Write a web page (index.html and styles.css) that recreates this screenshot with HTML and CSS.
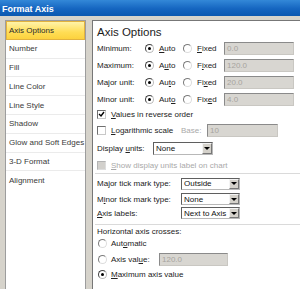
FILE: index.html
```html
<!DOCTYPE html>
<html>
<head>
<meta charset="utf-8">
<link rel="stylesheet" href="styles.css">
</head>
<body>
<div class="title">Format Axis</div>
<div class="main">
  <ul class="nav">
    <li class="sel">Axis Options</li>
    <li>Number</li>
    <li>Fill</li>
    <li>Line Color</li>
    <li>Line Style</li>
    <li>Shadow</li>
    <li>Glow and Soft Edges</li>
    <li>3-D Format</li>
    <li class="last">Alignment</li>
  </ul>
  <div class="pane">
    <div class="heading">Axis Options</div>

    <div class="row h17">
      <span class="lbl">Minimum:</span>
      <span class="radio on"></span><span class="opt"><u>A</u>uto</span>
      <span class="radio"></span><span class="opt2"><u>F</u>ixed</span>
      <span class="inp w70">0.0</span>
    </div>
    <div class="row h17">
      <span class="lbl">Maximum:</span>
      <span class="radio on"></span><span class="opt">A<u>u</u>to</span>
      <span class="radio"></span><span class="opt2">F<u>i</u>xed</span>
      <span class="inp w70">120.0</span>
    </div>
    <div class="row h17">
      <span class="lbl">Major unit:</span>
      <span class="radio on"></span><span class="opt">Au<u>t</u>o</span>
      <span class="radio"></span><span class="opt2">Fi<u>x</u>ed</span>
      <span class="inp w70">20.0</span>
    </div>
    <div class="row h17">
      <span class="lbl">Minor unit:</span>
      <span class="radio on"></span><span class="opt">Aut<u>o</u></span>
      <span class="radio"></span><span class="opt2">Fix<u>e</u>d</span>
      <span class="inp w70">4.0</span>
    </div>

    <div class="row h13">
      <span class="check on"><svg width="7" height="7" viewBox="0 0 7 7"><path d="M1 3 L3 5 L6 1" fill="none" stroke="#000" stroke-width="1.4"/></svg></span>
      <span class="ctext"><u>V</u>alues in reverse order</span>
    </div>
    <div class="row h19">
      <span class="check"></span>
      <span class="ctext wlog"><u>L</u>ogarithmic scale</span>
      <span class="dis wbase">Base:</span>
      <span class="inp w71">10</span>
    </div>
    <div class="row h17">
      <span class="lbl wdisp">Display <u>u</u>nits:</span>
      <span class="select w60 h13s"><span class="val">None</span><span class="btn"><i></i></span></span>
    </div>
    <div class="row h16">
      <span class="check off"></span>
      <span class="ctext dis"><u>S</u>how display units label on chart</span>
    </div>
    <div class="sep s1"></div>

    <div class="row h15">
      <span class="lbl wtick">Ma<u>j</u>or tick mark type:</span>
      <span class="select w59"><span class="val">Outside</span><span class="btn"><i></i></span></span>
    </div>
    <div class="row h16">
      <span class="lbl wtick">M<u>i</u>nor tick mark type:</span>
      <span class="select w59"><span class="val">None</span><span class="btn"><i></i></span></span>
    </div>
    <div class="row h12">
      <span class="lbl wtick"><u>A</u>xis labels:</span>
      <span class="select w59"><span class="val">Next to Axis</span><span class="btn"><i></i></span></span>
    </div>
    <div class="sep s2"></div>

    <div class="row h12">
      <span>Horizontal axis crosses:</span>
    </div>
    <div class="row h13">
      <span class="radio ind"></span><span class="rtext">Aut<u>o</u>matic</span>
    </div>
    <div class="row h18">
      <span class="radio ind"></span><span class="rtext wav">Axis val<u>u</u>e:</span>
      <span class="inp w69">120.0</span>
    </div>
    <div class="row h13">
      <span class="radio ind on"></span><span class="rtext"><u>M</u>aximum axis value</span>
    </div>
  </div>
</div>
</body>
</html>
```
FILE: styles.css
```css
html, body {
  margin: 0;
  padding: 0;
  width: 300px;
  height: 289px;
  overflow: hidden;
}
body {
  background: #d6d3cb;
  font-family: "Liberation Sans", Arial, sans-serif;
  font-size: 8px;
  color: #222;
}
.title {
  height: 16px;
  box-sizing: border-box;
  padding: 2px 0 0 2px;
  line-height: 14px;
  font-size: 9px;
  font-weight: bold;
  color: #fff;
  background: linear-gradient(#3388d8, #1565c0 55%, #0b58b0);
}
.main {
  display: flex;
  gap: 6px;
  padding: 4px 0 0 5px;
  height: 273px;
  box-sizing: border-box;
}
.nav {
  width: 81px;
  flex: none;
  box-sizing: border-box;
  margin: 0;
  padding: 0;
  list-style: none;
  background: #fff;
  border: 1px solid #9d9d9d;
  border-bottom: none;
  color: #3a3a3a;
}
.nav li {
  height: 18.8px;
  box-sizing: border-box;
  padding-left: 3px;
  border-bottom: 1px solid #ebebeb;
  display: flex;
  align-items: center;
  white-space: nowrap;
}
.nav li.sel {
  background: linear-gradient(#fff3a9, #ffdd55 60%, #fcd23e);
  border: 1px solid #e2b23e;
  padding-left: 2px;
  color: #2a2a2a;
}
.nav li.last {
  border-bottom: none;
}
.pane {
  flex: 1;
  background: #fff;
  border-left: 1px solid #777;
  border-top: 1px solid #777;
  padding-left: 4px;
  display: flex;
  flex-direction: column;
  white-space: nowrap;
}
.heading {
  height: 19px;
  box-sizing: border-box;
  padding-top: 3px;
  line-height: 16px;
  font-size: 11.5px;
  color: #1c1c1c;
}
.row {
  display: flex;
  align-items: center;
  flex: none;
}
.h12 { height: 12px; }
.h13 { height: 13px; }
.h15 { height: 15px; }
.h16 { height: 16px; }
.h17 { height: 17px; }
.h18 { height: 18px; }
.h19 { height: 19px; }

.lbl { width: 48px; flex: none; }
.wdisp { width: 56px; }
.wtick { width: 84px; }
.opt { width: 24px; margin-left: 5px; flex: none; }
.opt2 { width: 27px; margin-left: 5px; flex: none; }
.ctext { margin-left: 5px; }
.wlog { width: 70px; flex: none; }
.wbase { width: 26px; flex: none; }
.rtext { margin-left: 4px; }
.wav { width: 48px; flex: none; }
.dis { color: #a9a9a9; }

.radio {
  width: 9px;
  height: 9px;
  flex: none;
  box-sizing: border-box;
  border-radius: 50%;
  background: #fff;
  border: 1px solid;
  border-color: #7a7a7a #dcdcdc #dcdcdc #7a7a7a;
  position: relative;
}
.radio.on {
  border-color: #444 #bbb #bbb #444;
}
.radio.on::after {
  content: "";
  position: absolute;
  left: 2px;
  top: 2px;
  width: 3px;
  height: 3px;
  border-radius: 50%;
  background: #000;
}
.radio.ind { margin-left: 1px; }

.check {
  width: 9px;
  height: 9px;
  flex: none;
  box-sizing: border-box;
  background: #fff;
  border: 1px solid;
  border-color: #6f6f6f #c8c8c8 #c8c8c8 #6f6f6f;
  display: flex;
  align-items: center;
  justify-content: center;
}
.check.off {
  background: #d2d0cc;
  border-color: #b3b3b3 #dddddd #dddddd #b3b3b3;
}

.inp {
  height: 13px;
  flex: none;
  box-sizing: border-box;
  background: #d8d6d1;
  border: 1px solid;
  border-color: #8a8a8a #c9c7c2 #c9c7c2 #8a8a8a;
  color: #a7a49e;
  padding-left: 2px;
  line-height: 11px;
}
.w69 { width: 69px; }
.w70 { width: 70px; }
.w71 { width: 71px; }

.select {
  height: 12px;
  flex: none;
  box-sizing: border-box;
  background: #fff;
  border: 1px solid;
  border-color: #5f5f5f #b8b8b8 #b8b8b8 #5f5f5f;
  display: flex;
  align-items: stretch;
  color: #111;
}
.h13s { height: 13px; }
.w59 { width: 59px; }
.w60 { width: 60px; }
.select .val {
  flex: 1;
  padding-left: 2px;
  display: flex;
  align-items: center;
  overflow: hidden;
}
.select .btn {
  width: 10px;
  flex: none;
  box-sizing: border-box;
  background: #d4d1ca;
  border: 1px solid;
  border-color: #f4f4f4 #777 #777 #f4f4f4;
  display: flex;
  align-items: center;
  justify-content: center;
}
.select .btn i {
  width: 0;
  height: 0;
  border-left: 3px solid transparent;
  border-right: 3px solid transparent;
  border-top: 3px solid #000;
}

.sep {
  height: 1px;
  background: #dadada;
  flex: none;
  margin-left: -2px;
}
.s1 { margin-bottom: 2px; }
.s2 { margin-top: 5px; }
```
